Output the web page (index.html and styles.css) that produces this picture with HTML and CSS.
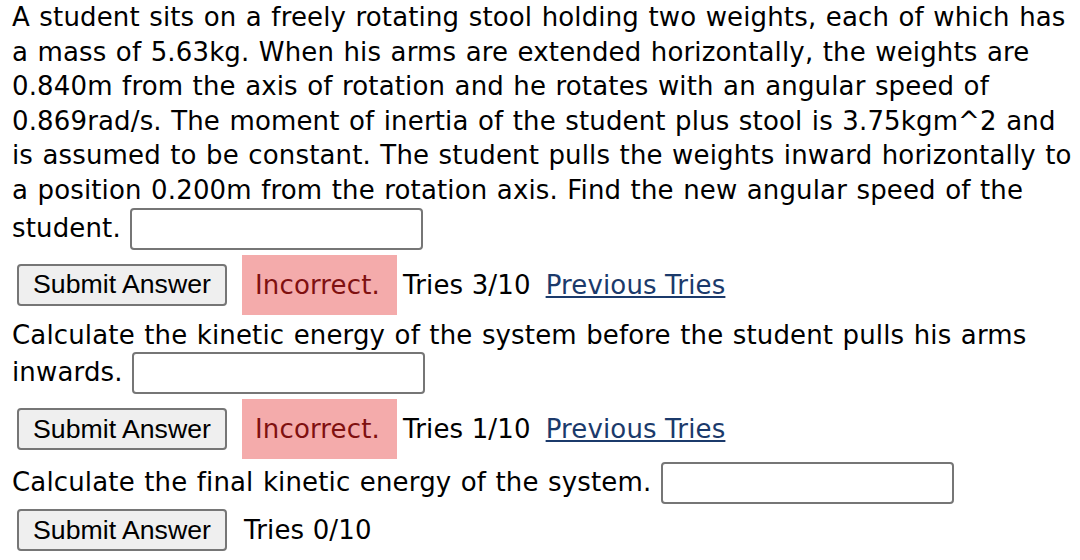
FILE: index.html
```html
<!DOCTYPE html>
<html>
<head>
  <title>Rotating Stool Problem</title>
  <link rel="stylesheet" href="styles.css">
</head>
<body>
  <div class="problem">
    <p class="question">A student sits on a freely rotating stool holding two weights, each of which has a mass of 5.63kg. When his arms are extended horizontally, the weights are 0.840m from the axis of rotation and he rotates with an angular speed of 0.869rad/s. The moment of inertia of the student plus stool is 3.75kgm^2 and is assumed to be constant. The student pulls the weights inward horizontally to a position 0.200m from the rotation axis. Find the new angular speed of the student. <input class="answer" type="text"></p>
    <div class="status">
      <button class="submit">Submit Answer</button>
      <span class="verdict">Incorrect.</span>
      <span class="tries">Tries 3/10</span>
      <a class="previous" href="#">Previous Tries</a>
    </div>

    <p class="question">Calculate the kinetic energy of the system before the student pulls his arms inwards. <input class="answer" type="text"></p>
    <div class="status">
      <button class="submit">Submit Answer</button>
      <span class="verdict">Incorrect.</span>
      <span class="tries">Tries 1/10</span>
      <a class="previous" href="#">Previous Tries</a>
    </div>

    <p class="question">Calculate the final kinetic energy of the system. <input class="answer" type="text"></p>
    <div class="status">
      <button class="submit">Submit Answer</button>
      <span class="tries plain">Tries 0/10</span>
    </div>
  </div>
</body>
</html>
```

FILE: styles.css
```css
body {
  margin: 0;
  background: #fff;
  color: #000;
  font-family: "DejaVu Sans", Verdana, sans-serif;
  font-size: 26px;
  letter-spacing: 0.15px;
}

.problem {
  padding: 0 6px 0 12px;
}

.question {
  margin: 0;
  line-height: 34.6px;
  word-spacing: 1px;
}

.answer {
  width: 293px;
  height: 42px;
  box-sizing: border-box;
  border: 2px solid #767676;
  border-radius: 4px;
  padding: 2px 4px;
  font-family: inherit;
  font-size: 26px;
  vertical-align: middle;
}

.status {
  display: flex;
  align-items: center;
  padding-left: 5px;
  margin: 5px 0 3px;
}

.submit {
  width: 210px;
  height: 42px;
  box-sizing: border-box;
  border: 2px solid #767676;
  border-radius: 4px;
  background: #efefef;
  color: #000;
  font-family: "Liberation Sans", Arial, sans-serif;
  font-size: 26.67px;
  letter-spacing: 0;
  padding: 0;
}

.verdict {
  margin-left: 15px;
  height: 60px;
  line-height: 60px;
  padding: 0 17px 0 13px;
  background: #f4abab;
  color: #7f1010;
}

.tries {
  margin-left: 6px;
}

.tries.plain {
  margin-left: 17px;
}

.previous {
  margin-left: 15px;
  color: #1b3a6b;
  text-decoration: underline;
}
```
